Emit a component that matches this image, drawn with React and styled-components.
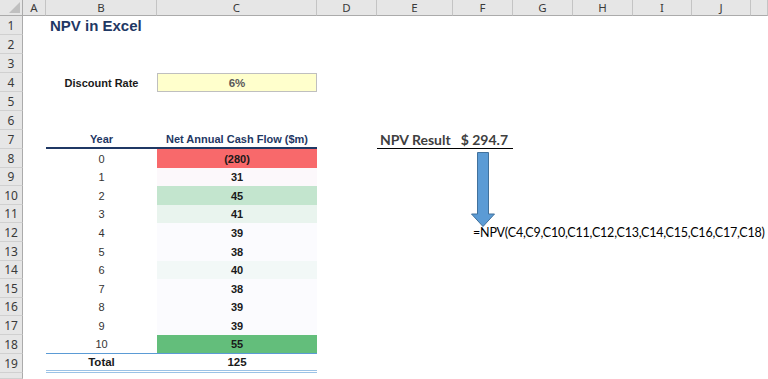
import React from "react";
import styled, { createGlobalStyle } from "styled-components";

const GlobalStyle = createGlobalStyle`
  html, body {
    margin: 0;
    padding: 0;
    background: #fff;
    overflow: hidden;
  }
`;

// K is only a sliver at the right edge, row 20 only a sliver at the bottom
const COLS = ["A", "B", "C", "D", "E", "F", "G", "H", "I", "J", "K"];
const ROW_HEIGHTS = [19, 19, 19, 19, 19, 19, 19, 19, 18, 19, 18, 19, 19, 18, 19, 18, 19, 19, 19];

const Sheet = styled.div`
  position: relative;
  width: 768px;
  height: 379px;
  overflow: hidden;
  display: grid;
  grid-template-columns: 23px 23px 111px 160px 60px 76px 60px 60px 60px 59px 59px 1fr;
  grid-template-rows: 16px ${ROW_HEIGHTS.map((h) => h + "px").join(" ")} 1fr;
  background: #fff;
  font-family: "Liberation Sans", Arial, sans-serif;
`;

const Corner = styled.div`
  position: relative;
  background: #e6e6e6;
  border-right: 1px solid #ababab;
  border-bottom: 1px solid #ababab;
  box-sizing: border-box;

  &::after {
    content: "";
    position: absolute;
    right: 2px;
    bottom: 2px;
    border-left: 11px solid transparent;
    border-bottom: 11px solid #c0c0c0;
  }
`;

const ColHead = styled.div`
  background: #e6e6e6;
  border-right: 1px solid #c4c4c4;
  border-bottom: 1px solid #ababab;
  box-sizing: border-box;
  display: flex;
  align-items: center;
  justify-content: center;
  font-family: "Noto Sans", "Open Sans", sans-serif;
  font-size: 11.5px;
  color: #3a3a3a;
`;

const RowHead = styled.div`
  background: #e6e6e6;
  border-right: 1px solid #ababab;
  border-bottom: 1px solid #d0d0d0;
  box-sizing: border-box;
  display: flex;
  align-items: center;
  justify-content: center;
  font-family: "Noto Sans", "Open Sans", sans-serif;
  font-size: 12px;
  color: #3a3a3a;
`;

const Cell = styled.div`
  box-sizing: border-box;
  display: flex;
  align-items: center;
  justify-content: ${(p) => p.$align || "flex-start"};
  padding: 0 ${(p) => p.$pad ?? 3}px;
  white-space: nowrap;
  overflow: visible;
  font-size: ${(p) => p.$size || 11}px;
  font-weight: ${(p) => (p.$bold ? 700 : 400)};
  color: ${(p) => p.$color || "#000"};
  background: ${(p) => p.$bg || "transparent"};
  ${(p) => p.$spacing && `letter-spacing: ${p.$spacing}px;`}
  ${(p) => p.$box && `border: 1px solid ${p.$box};`}
  ${(p) => p.$under && `border-bottom: ${p.$under};`}
  ${(p) => p.$font && `font-family: ${p.$font};`}
`;

const Arrow = styled.svg`
  position: absolute;
  left: 471px;
  top: 152px;
`;

const NAVY = "#1f3864";
const CALIBRI = `Lato, "Open Sans", sans-serif`;

const flows = [
  { year: 0, value: "(280)", bg: "#f8696b" },
  { year: 1, value: "31", bg: "#fcf8fb" },
  { year: 2, value: "45", bg: "#c3e5ce" },
  { year: 3, value: "41", bg: "#e9f4ee" },
  { year: 4, value: "39", bg: "#fbfbfe" },
  { year: 5, value: "38", bg: "#fbfbfe" },
  { year: 6, value: "40", bg: "#f2f8f7" },
  { year: 7, value: "38", bg: "#fbfbfe" },
  { year: 8, value: "39", bg: "#fbfbfe" },
  { year: 9, value: "39", bg: "#fbfbfe" },
  { year: 10, value: "55", bg: "#63be7b" },
];

const cells = {
  B1: { text: "NPV in Excel", $bold: true, $size: 15, $color: NAVY, $pad: 4 },
  B4: { text: "Discount Rate", $bold: true, $align: "center", $color: "#1a1a1a" },
  C4: { text: "6%", $bold: true, $align: "center", $color: "#595959", $bg: "#ffffcc", $box: "#bfbfbf", $size: 11.5 },
  B7: { text: "Year", $bold: true, $align: "center", $color: NAVY, $under: `2px solid ${NAVY}` },
  C7: { text: "Net Annual Cash Flow ($m)", $bold: true, $align: "center", $color: NAVY, $under: `2px solid ${NAVY}` },
  E7: { text: "NPV Result", $bold: true, $size: 14, $font: CALIBRI, $color: "#404040", $under: "1px solid #000", $pad: 3 },
  F7: { text: "$ 294.7", $bold: true, $size: 14, $font: CALIBRI, $color: "#404040", $under: "1px solid #000", $align: "flex-end", $pad: 5 },
  F12: { text: "=NPV(C4,C9,C10,C11,C12,C13,C14,C15,C16,C17,C18)", $size: 12.5, $spacing: -0.2, $font: CALIBRI, $pad: 20 },
  B19: { text: "Total", $bold: true, $size: 11.5, $align: "center", $color: "#1a1a1a", $under: "3px double #9bc2e6" },
  C19: { text: "125", $bold: true, $size: 11.5, $align: "center", $color: "#1a1a1a", $under: "3px double #9bc2e6" },
};

flows.forEach((f, i) => {
  const r = 8 + i;
  const last = f.year === 10 ? { $under: "1px solid #5b9bd5" } : {};
  cells["B" + r] = { text: String(f.year), $align: "center", $color: "#333", ...last };
  cells["C" + r] = { text: f.value, $bold: true, $align: "center", $color: "#1a1a1a", $bg: f.bg, ...last };
});

const App = () => {
  const rows = ROW_HEIGHTS.map((_, i) => i + 1).concat(20);
  return (
    <>
      <GlobalStyle />
      <Sheet>
        <Corner />
        {COLS.map((c) => (
          <ColHead key={c}>{c === "K" ? null : c}</ColHead>
        ))}
        {rows.map((r) => (
          <React.Fragment key={r}>
            <RowHead>{r === 20 ? null : r}</RowHead>
            {COLS.map((c) => {
              const { text, ...style } = cells[c + r] || {};
              return (
                <Cell key={c} {...style}>
                  {text}
                </Cell>
              );
            })}
          </React.Fragment>
        ))}
        <Arrow width="25" height="76" viewBox="0 0 25 76">
          <path
            d="M6.5 0.5 H17.5 V62 H23.5 L12 74.5 L0.5 62 H6.5 Z"
            fill="#5b9bd5"
            stroke="#41719c"
            strokeWidth="1"
          />
        </Arrow>
      </Sheet>
    </>
  );
};

export default App;
